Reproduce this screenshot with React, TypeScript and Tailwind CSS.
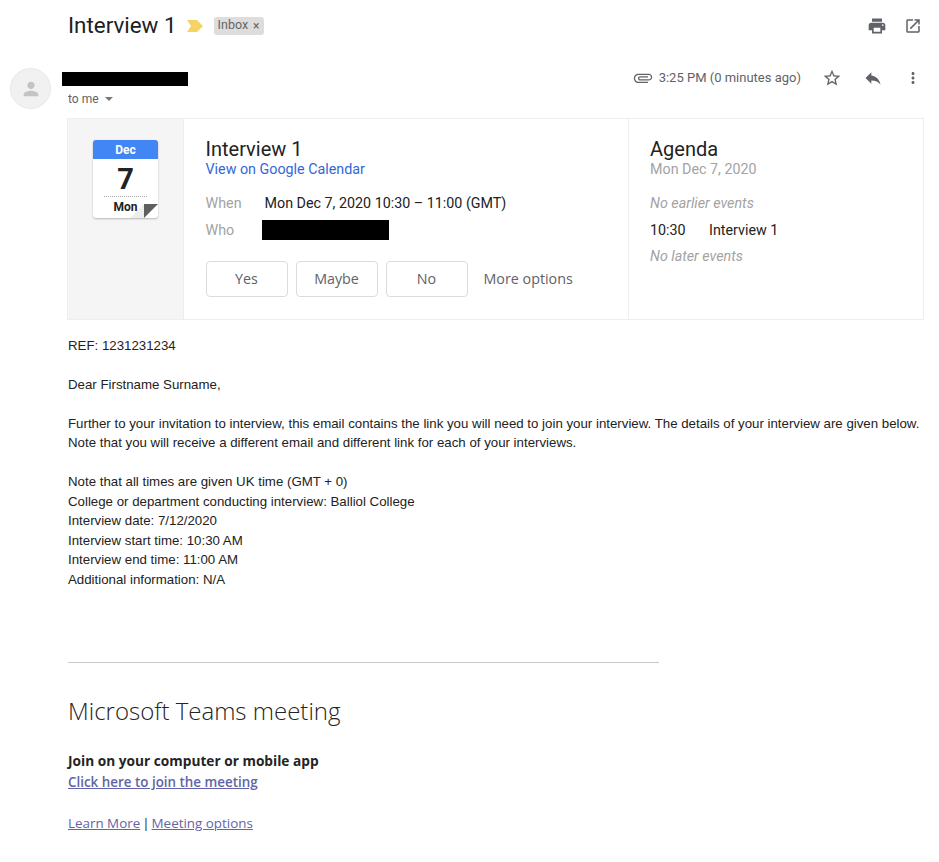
const BODY_LINES = [
  'Note that all times are given UK time (GMT + 0)',
  'College or department conducting interview: Balliol College',
  'Interview date: 7/12/2020',
  'Interview start time: 10:30 AM',
  'Interview end time: 11:00 AM',
  'Additional information: N/A',
];

function Icon({ d, className }: { d: string; className: string }) {
  return (
    <svg viewBox="0 0 24 24" className={className} fill="currentColor">
      <path d={d} />
    </svg>
  );
}

function CalendarTile() {
  return (
    <div className="relative h-[78px] w-[65px] overflow-hidden rounded-[3px] bg-white shadow-[0_1px_2px_rgba(0,0,0,0.25)]">
      <div className="flex h-[19px] items-center justify-center bg-[#4285f4] text-[12px] font-bold text-white">Dec</div>
      <div className="mx-[11px] flex h-[38px] items-end justify-center border-b border-dotted border-[#aaa] pb-[2px] text-[29px] font-bold leading-none text-[#222]">
        7
      </div>
      <div className="pt-[2px] text-center text-[12px] font-bold leading-[16px] text-[#222]">Mon</div>
      <svg viewBox="0 0 28 14" className="absolute bottom-0 right-0 h-[14px] w-[28px]">
        <path d="M0 14 14 0v14z" fill="#eee" />
        <path d="M14 0h14L14 14z" fill="#5f5f5f" />
      </svg>
    </div>
  );
}

function RsvpButton({ label }: { label: string }) {
  return (
    <button className="h-[36px] w-[82px] rounded-[4px] border border-[#dadce0] bg-white font-['Open_Sans',sans-serif] text-[14.3px] font-medium text-[#5f6368]">
      {label}
    </button>
  );
}

export default function App() {
  return (
    <main className="min-h-[862px] bg-white font-['Roboto',sans-serif] text-[#222]">
      <header className="flex h-[51px] items-center pl-[68px] pr-[17px]">
        <h1 className="text-[22.4px] font-normal leading-none text-[#202124]">Interview 1</h1>
        <svg viewBox="0 0 16 12" className="ml-[10px] h-[12px] w-[16px]">
          <path d="M0 0h10l6 6-6 6H0l4-6z" fill="#f6d365" />
        </svg>
        <span className="ml-[11px] flex h-[18px] items-center gap-[5px] rounded-[3px] bg-[#dddddd] pl-[4px] pr-[4px] text-[12.5px] text-[#666]">
          Inbox <span className="text-[12px] leading-none">×</span>
        </span>
        <div className="ml-auto flex items-center gap-[17px] text-[#5f6368]">
          <Icon
            className="h-[20px] w-[20px]"
            d="M19 8H5c-1.66 0-3 1.34-3 3v6h4v4h12v-4h4v-6c0-1.66-1.34-3-3-3zm-3 11H8v-5h8v5zm3-7c-.55 0-1-.45-1-1s.45-1 1-1 1 .45 1 1-.45 1-1 1zm-1-9H6v4h12V3z"
          />
          <Icon
            className="h-[18px] w-[18px]"
            d="M19 19H5V5h7V3H5c-1.11 0-2 .9-2 2v14c0 1.1.89 2 2 2h14c1.1 0 2-.9 2-2v-7h-2v7zM14 3v2h3.59l-9.83 9.83 1.41 1.41L19 6.41V10h2V3h-7z"
          />
        </div>
      </header>

      <section className="flex h-[67px] pl-[10px] pr-[17px] pt-[17px]">
        <div className="flex h-[41px] w-[41px] items-center justify-center rounded-full border border-[#e8e8e8] bg-[#f1f1f1] text-[#c4c4c4]">
          <Icon
            className="h-[22px] w-[22px]"
            d="M12 12c2.21 0 4-1.79 4-4s-1.79-4-4-4-4 1.79-4 4 1.79 4 4 4zm0 2c-2.67 0-8 1.34-8 4v2h16v-2c0-2.66-5.33-4-8-4z"
          />
        </div>
        <div className="ml-[11px]">
          <div className="mt-[4px] h-[14px] w-[126px] bg-black" />
          <div className="flex items-center pl-[6px] pt-[5px] text-[12px] leading-[16px] text-[#5f6368]">
            to me
            <span className="ml-[6px] h-0 w-0 border-x-[4px] border-t-[4px] border-x-transparent border-t-[#777]" />
          </div>
        </div>
        <div className="ml-auto flex h-[20px] items-center text-[#5f6368]">
          <Icon
            className="h-[20px] w-[20px] rotate-90"
            d="M16.5 6v11.5c0 2.21-1.79 4-4 4s-4-1.79-4-4V5c0-1.38 1.12-2.5 2.5-2.5s2.5 1.12 2.5 2.5v10.5c0 .55-.45 1-1 1s-1-.45-1-1V6H10v9.5c0 1.38 1.12 2.5 2.5 2.5s2.5-1.12 2.5-2.5V5c0-2.21-1.79-4-4-4S7 2.79 7 5v12.5c0 3.04 2.46 5.5 5.5 5.5s5.5-2.46 5.5-5.5V6h-1.5z"
          />
          <span className="ml-[6px] text-[13px]">3:25 PM (0 minutes ago)</span>
          <Icon
            className="ml-[21px] h-[20px] w-[20px]"
            d="M22 9.24l-7.19-.62L12 2 9.19 8.63 2 9.24l5.46 4.73L5.82 21 12 17.27 18.18 21l-1.63-7.03L22 9.24zM12 15.4l-3.76 2.27 1-4.28-3.32-2.88 4.38-.38L12 6.1l1.71 4.04 4.38.38-3.32 2.88 1 4.28L12 15.4z"
          />
          <Icon className="ml-[21px] h-[20px] w-[20px]" d="M10 9V5l-7 7 7 7v-4.1c5 0 8.5 1.6 11 5.1-1-5-4-10-11-11z" />
          <Icon
            className="ml-[21px] h-[18px] w-[18px]"
            d="M12 8c1.1 0 2-.9 2-2s-.9-2-2-2-2 .9-2 2 .9 2 2 2zm0 2c-1.1 0-2 .9-2 2s.9 2 2 2 2-.9 2-2-.9-2-2-2zm0 6c-1.1 0-2 .9-2 2s.9 2 2 2 2-.9 2-2-.9-2-2-2z"
          />
        </div>
      </section>

      <div className="pl-[67px] pr-[15px]">
        <section className="flex h-[202px] border-[1.5px] border-[#eeeeee]">
          <div className="flex w-[116px] justify-center border-r-[1.5px] border-[#eeeeee] bg-[#f5f5f5] pt-[21px]">
            <CalendarTile />
          </div>
          <div className="w-[445px] border-r-[1.5px] border-[#eeeeee] pl-[21.5px] pt-[17.5px]">
            <h2 className="text-[20px] font-normal leading-[24px] text-[#222]">Interview 1</h2>
            <a className="block text-[14.3px] leading-[16px] text-[#3367d6]">View on Google Calendar</a>
            <div className="mt-[16px] flex text-[14.3px] leading-[20px]">
              <span className="w-[59px] text-[#a3a3a3]">When</span>
              <span>Mon Dec 7, 2020 10:30 – 11:00 (GMT)</span>
            </div>
            <div className="mt-[7px] flex h-[20px] items-center text-[14.3px] leading-[20px]">
              <span className="w-[56px] text-[#a3a3a3]">Who</span>
              <span className="h-[20px] w-[127px] bg-black" />
            </div>
            <div className="mt-[21px] flex items-center gap-[8px]">
              <RsvpButton label="Yes" />
              <RsvpButton label="Maybe" />
              <RsvpButton label="No" />
              <span className="ml-[8px] font-['Open_Sans',sans-serif] text-[14.3px] font-medium text-[#5f6368]">More options</span>
            </div>
          </div>
          <div className="flex-1 pl-[21px] pt-[17.5px] text-[14.3px]">
            <h2 className="text-[20px] font-normal leading-[24px] text-[#222]">Agenda</h2>
            <p className="leading-[16px] text-[#a3a3a3]">Mon Dec 7, 2020</p>
            <p className="mt-[16px] italic leading-[20px] text-[#a3a3a3]">No earlier events</p>
            <div className="mt-[7px] flex leading-[20px]">
              <span className="w-[59px]">10:30</span>
              <span>Interview 1</span>
            </div>
            <p className="mt-[6px] italic leading-[20px] text-[#a3a3a3]">No later events</p>
          </div>
        </section>

        <article className="pl-px pt-[15.5px] font-['Liberation_Sans',sans-serif] text-[13.27px] leading-[19.5px] text-[#222]">
          <p>REF: 1231231234</p>
          <p className="mt-[19.5px]">Dear Firstname Surname,</p>
          <p className="mt-[19.5px] whitespace-nowrap">
            Further to your invitation to interview, this email contains the link you will need to join your interview. The details of your interview are given below.
            <br />
            Note that you will receive a different email and different link for each of your interviews.
          </p>
          <div className="mt-[19.5px]">
            {BODY_LINES.map((line) => (
              <p key={line}>{line}</p>
            ))}
          </div>
        </article>

        <div className="ml-px mt-[73px] h-px w-[591px] bg-[#c8c8c8]" />

        <section className="pl-px font-['Open_Sans',sans-serif] text-[13.4px] text-[#252424]">
          <h2 className="mt-[32px] text-[24px] font-light leading-[32px]">Microsoft Teams meeting</h2>
          <p className="mt-[24px] text-[13.7px] font-bold leading-[20px]">Join on your computer or mobile app</p>
          <a className="mt-px block font-semibold leading-[20px] text-[#6264a7] underline">Click here to join the meeting</a>
          <p className="mt-[21px] flex gap-[2px] leading-[20px]">
            <a className="text-[#6264a7] underline">Learn More</a>
            <span>|</span>
            <a className="text-[#6264a7] underline">Meeting options</a>
          </p>
        </section>
      </div>
    </main>
  );
}
